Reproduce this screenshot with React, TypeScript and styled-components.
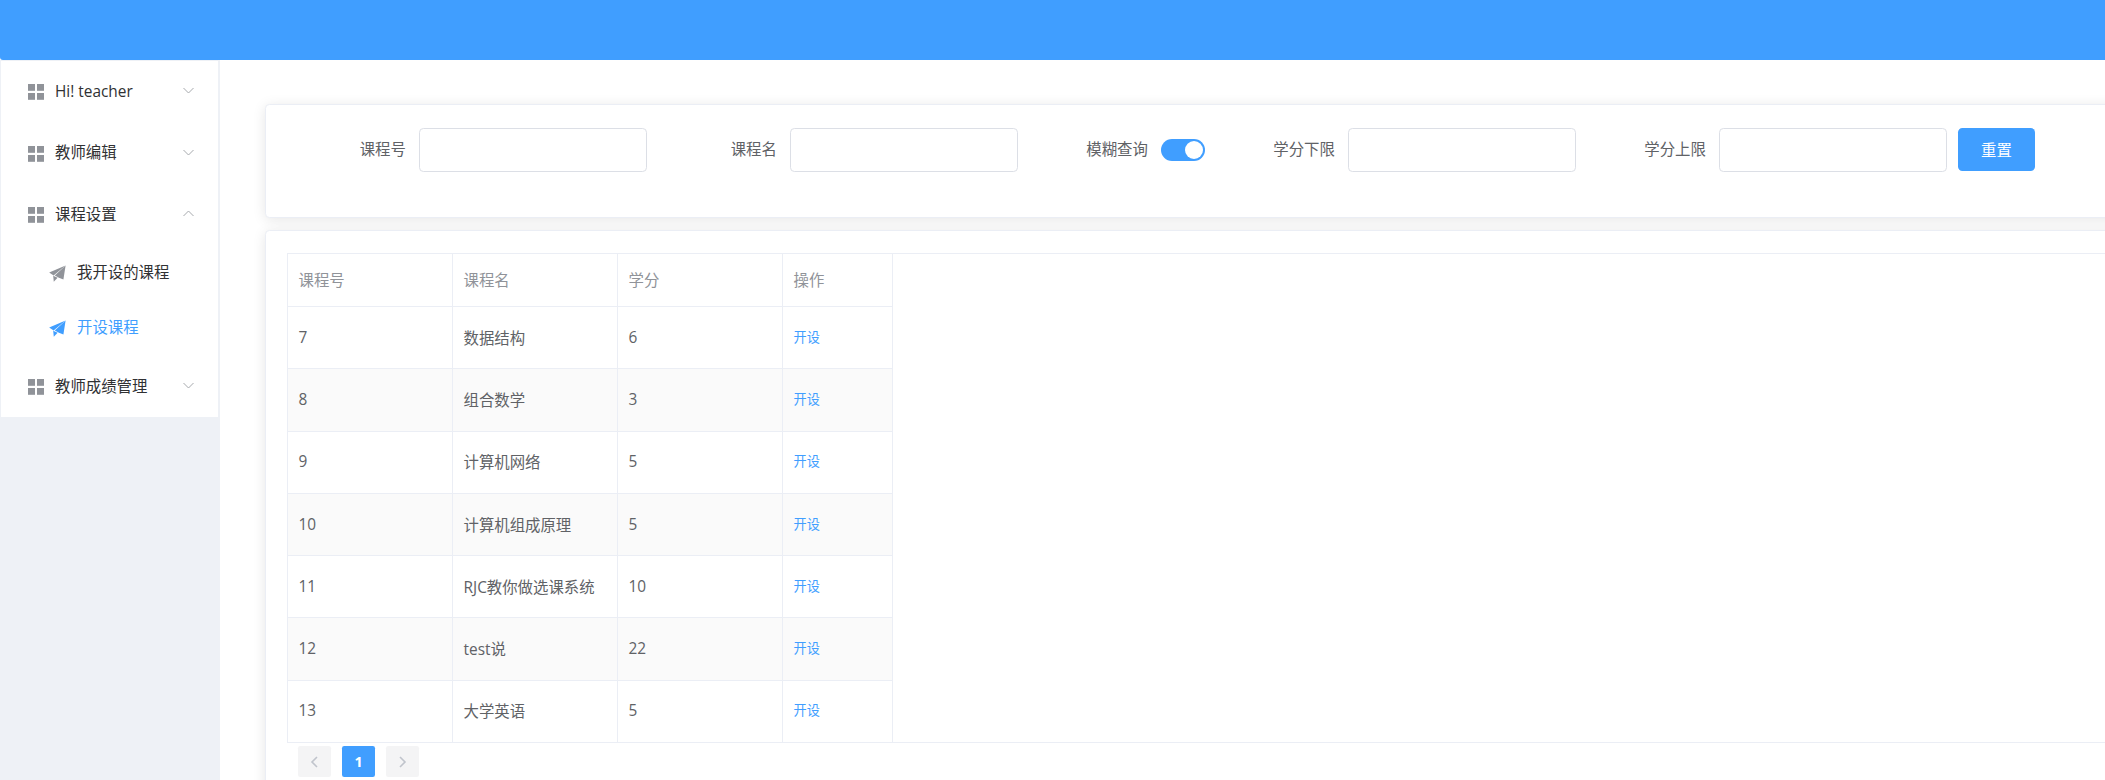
import React from "react";
import styled, { createGlobalStyle } from "styled-components";

const GlobalStyle = createGlobalStyle`
  html, body {
    margin: 0;
    padding: 0;
    background: #fff;
  }
  body {
    font-family: "Open Sans", "Noto Sans CJK SC", sans-serif;
    font-size: 15.4px;
    color: #606266;
  }
  * {
    box-sizing: border-box;
  }
`;

const Page = styled.div`
  width: 2105px;
  height: 780px;
  overflow: hidden;
  display: flex;
  flex-direction: column;
`;

const Header = styled.header`
  height: 60px;
  flex: none;
  background: #409eff;
  border-radius: 0 0 0 3px;
`;

const Body = styled.div`
  flex: 1;
  display: flex;
  min-height: 0;
`;

const Sidebar = styled.aside`
  width: 220px;
  flex: none;
  background: #eef1f6;
  padding: 1px 2px 0 1px;
`;

const Menu = styled.nav`
  background: #fff;
`;

const MenuRow = styled.div<{ $sub?: boolean; $active?: boolean }>`
  display: flex;
  align-items: center;
  height: ${props => (props.$sub ? "55px" : "61.6px")};
  padding-left: ${props => (props.$sub ? "48px" : "26px")};
  padding-right: 24px;
  color: ${props => (props.$active ? "#409eff" : "#303133")};
`;

const MenuIcon = styled.span<{ $active?: boolean }>`
  display: flex;
  width: 17px;
  height: 17px;
  flex: none;
  color: ${props => (props.$active ? "#409eff" : "#909399")};
`;

const MenuText = styled.span`
  flex: 1;
  margin-left: 11px;
  line-height: 20px;
  margin-top: 0;
`;

const Arrow = styled.svg`
  flex: none;
  margin-top: -2px;
`;

const Main = styled.main`
  flex: 1;
  min-width: 0;
  overflow: hidden;
  padding: 44px 0 0 45px;
`;

const Card = styled.section`
  width: 1900px;
  background: #fff;
  border: 1px solid #ebeef5;
  border-radius: 4.4px;
  box-shadow: 0 2px 13px 0 rgba(0, 0, 0, 0.1);
  padding: 22px 21px;
  & + & {
    margin-top: 12px;
  }
`;

const SearchForm = styled.form`
  display: flex;
  align-items: flex-start;
  gap: 11px;
  height: 67px;
  margin: 1px 0 0;
`;

const FormItem = styled.div`
  display: flex;
  align-items: center;
  height: 44px;
`;

const FormLabel = styled.label`
  width: 132px;
  padding-right: 13.2px;
  text-align: right;
  margin-top: -3px;
`;

const TextInput = styled.input`
  width: 228px;
  height: 44px;
  border: 1px solid #dcdfe6;
  border-radius: 4.4px;
  background: #fff;
  outline: none;
`;

const Switch = styled.span`
  display: flex;
  justify-content: flex-end;
  align-items: center;
  width: 44px;
  height: 22px;
  padding: 2px;
  border-radius: 11px;
  background: #409eff;
`;

const SwitchKnob = styled.span`
  width: 18px;
  height: 18px;
  border-radius: 50%;
  background: #fff;
`;

const ResetButton = styled.button`
  width: 77px;
  height: 43px;
  border: none;
  border-radius: 4.4px;
  background: #409eff;
  color: #fff;
  font: inherit;
`;

const Table = styled.div`
  border-top: 1px solid #ebeef5;
  border-left: 1px solid #ebeef5;
`;

const Row = styled.div<{ $head?: boolean; $striped?: boolean }>`
  display: flex;
  height: ${props => (props.$head ? "53px" : "62.3px")};
  color: ${props => (props.$head ? "#909399" : "#606266")};
  & > * {
    background: ${props => (props.$striped ? "#fafafa" : "#fff")};
    border-bottom: 1px solid #ebeef5;
  }
`;

const Cell = styled.div<{ $width: number }>`
  width: ${props => props.$width}px;
  flex: none;
  display: flex;
  align-items: center;
  padding: 0 0 1px 10.5px;
  border-right: 1px solid #ebeef5;
`;

const Filler = styled.div<{ $last?: boolean }>`
  flex: 1;
  && {
    background: #fff;
    border-bottom-color: ${props => (props.$last ? "#ebeef5" : "#fff")};
  }
`;

const OpenLink = styled.a`
  color: #409eff;
  font-size: 13.2px;
  text-decoration: none;
  margin-top: -2px;
`;

const Pagination = styled.div`
  display: flex;
  gap: 11px;
  margin: 3px 0 0 11px;
`;

const PageButton = styled.span<{ $active?: boolean }>`
  display: flex;
  align-items: center;
  justify-content: center;
  width: 33px;
  height: 31px;
  border-radius: 2.2px;
  background: ${props => (props.$active ? "#409eff" : "#f4f4f5")};
  color: ${props => (props.$active ? "#fff" : "#c0c4cc")};
  font-size: 14.3px;
  font-weight: 700;
`;

const GridIcon = () => (
  <svg width="17" height="17" viewBox="0 0 17 17" fill="currentColor">
    <rect x="1" y="1" width="7" height="6.8" />
    <rect x="10" y="1" width="7" height="6.8" />
    <rect x="1" y="10" width="7" height="6.8" />
    <rect x="10" y="10" width="7" height="6.8" />
  </svg>
);

const PlaneIcon = () => (
  <svg width="17" height="17" viewBox="0 0 17 17" fill="currentColor">
    <path d="M0.2 7.6 16.6 0.4 4.6 10.4Z" />
    <path d="M16.6 0.4 14.4 14.6 9.4 12.4 5.8 10.6Z" />
    <path d="M4.2 10.8 8.6 12.8 4.8 16.8Z" />
  </svg>
);

const ArrowIcon = ({ up }: { up?: boolean }) => (
  <Arrow width="11" height="7" viewBox="0 0 11 7" fill="none" stroke="#a6a9ad" strokeWidth="1">
    <polyline points={up ? "0.5,6 5.5,1 10.5,6" : "0.5,1 5.5,6 10.5,1"} />
  </Arrow>
);

const PagerChevron = ({ left }: { left?: boolean }) => (
  <svg width="9" height="12" viewBox="0 0 9 12" fill="none" stroke="#c0c4cc" strokeWidth="1.6">
    <polyline points={left ? "7,1 2,6 7,11" : "2,1 7,6 2,11"} />
  </svg>
);

const courses = [
  { id: 7, name: "数据结构", credit: 6 },
  { id: 8, name: "组合数学", credit: 3 },
  { id: 9, name: "计算机网络", credit: 5 },
  { id: 10, name: "计算机组成原理", credit: 5 },
  { id: 11, name: "RJC教你做选课系统", credit: 10 },
  { id: 12, name: "test说", credit: 22 },
  { id: 13, name: "大学英语", credit: 5 },
];

export default function App() {
  return (
    <Page>
      <GlobalStyle />
      <Header />
      <Body>
        <Sidebar>
          <Menu>
            <MenuRow>
              <MenuIcon><GridIcon /></MenuIcon>
              <MenuText>Hi! teacher</MenuText>
              <ArrowIcon />
            </MenuRow>
            <MenuRow>
              <MenuIcon><GridIcon /></MenuIcon>
              <MenuText>教师编辑</MenuText>
              <ArrowIcon />
            </MenuRow>
            <MenuRow>
              <MenuIcon><GridIcon /></MenuIcon>
              <MenuText>课程设置</MenuText>
              <ArrowIcon up />
            </MenuRow>
            <MenuRow $sub>
              <MenuIcon><PlaneIcon /></MenuIcon>
              <MenuText>我开设的课程</MenuText>
            </MenuRow>
            <MenuRow $sub $active>
              <MenuIcon $active><PlaneIcon /></MenuIcon>
              <MenuText>开设课程</MenuText>
            </MenuRow>
            <MenuRow>
              <MenuIcon><GridIcon /></MenuIcon>
              <MenuText>教师成绩管理</MenuText>
              <ArrowIcon />
            </MenuRow>
          </Menu>
        </Sidebar>
        <Main>
          <Card>
            <SearchForm>
              <FormItem>
                <FormLabel>课程号</FormLabel>
                <TextInput />
              </FormItem>
              <FormItem>
                <FormLabel>课程名</FormLabel>
                <TextInput />
              </FormItem>
              <FormItem>
                <FormLabel>模糊查询</FormLabel>
                <Switch><SwitchKnob /></Switch>
              </FormItem>
              <FormItem>
                <FormLabel>学分下限</FormLabel>
                <TextInput />
              </FormItem>
              <FormItem>
                <FormLabel>学分上限</FormLabel>
                <TextInput />
              </FormItem>
              <ResetButton type="button">重置</ResetButton>
            </SearchForm>
          </Card>
          <Card>
            <Table>
              <Row $head>
                <Cell $width={165}>课程号</Cell>
                <Cell $width={165}>课程名</Cell>
                <Cell $width={165}>学分</Cell>
                <Cell $width={110}>操作</Cell>
                <Filler />
              </Row>
              {courses.map((course, index) => (
                <Row key={course.id} $striped={index % 2 === 1}>
                  <Cell $width={165}>{course.id}</Cell>
                  <Cell $width={165}>{course.name}</Cell>
                  <Cell $width={165}>{course.credit}</Cell>
                  <Cell $width={110}>
                    <OpenLink href="#">开设</OpenLink>
                  </Cell>
                  <Filler $last={index === courses.length - 1} />
                </Row>
              ))}
            </Table>
            <Pagination>
              <PageButton><PagerChevron left /></PageButton>
              <PageButton $active>1</PageButton>
              <PageButton><PagerChevron /></PageButton>
            </Pagination>
          </Card>
        </Main>
      </Body>
    </Page>
  );
}
